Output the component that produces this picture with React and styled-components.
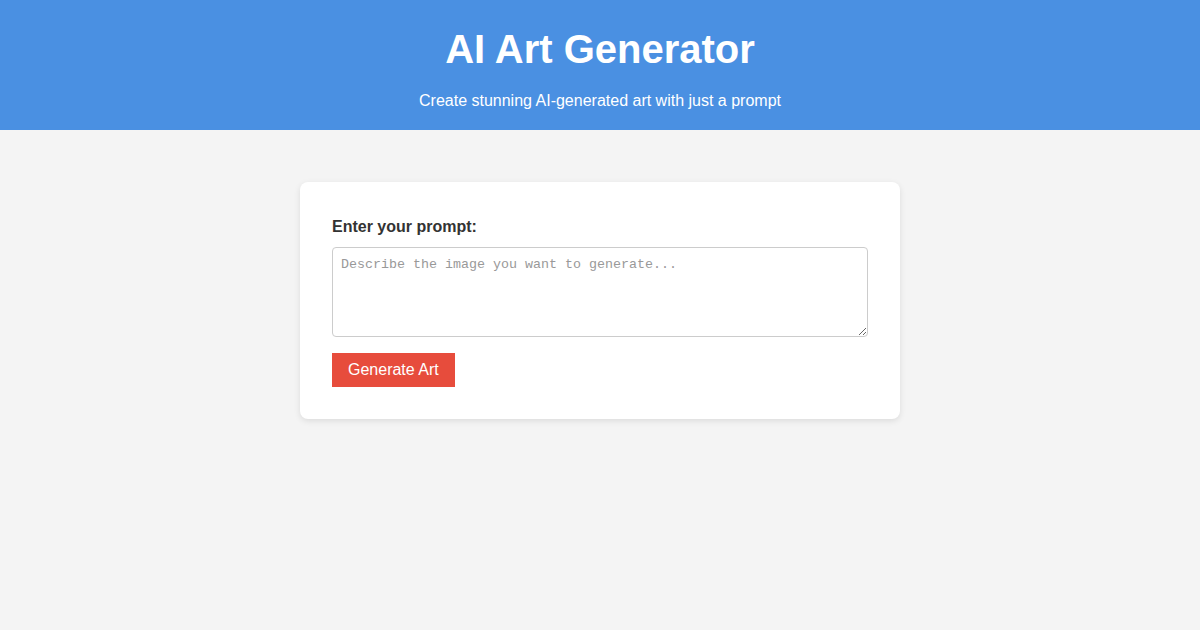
import React, { useState } from "react"
import styled, { createGlobalStyle } from "styled-components"

const GlobalStyle = createGlobalStyle`
  * {
    box-sizing: border-box;
  }

  body {
    margin: 0;
    background: #f4f4f4;
    font-family: "Liberation Sans", Arial, sans-serif;
    color: #333;
  }
`

const S = {
  Header: styled.header`
    background: #4a90e2;
    color: #fff;
    text-align: center;
    padding: 26px 20px 20px;
  `,
  Title: styled.h1`
    margin: 0;
    font-size: 40px;
    font-weight: bold;
    line-height: 46px;
  `,
  Subtitle: styled.p`
    margin: 20px 0 0;
    font-size: 16px;
    line-height: 18px;
  `,
  Main: styled.main`
    display: flex;
    justify-content: center;
    padding: 52px 20px;
  `,
  Card: styled.section`
    width: 600px;
    background: #fff;
    border-radius: 8px;
    box-shadow: 0 2px 6px rgba(0, 0, 0, 0.1);
    padding: 32px;
    display: flex;
    flex-direction: column;
    align-items: flex-start;
  `,
  Label: styled.label`
    display: block;
    margin: 4px 0 11px;
    font-size: 16px;
    line-height: 18px;
    font-weight: bold;
    color: #333;
  `,
  Prompt: styled.textarea`
    display: block;
    width: 100%;
    height: 90px;
    padding: 9px 8px 7px;
    border: 1px solid #ccc;
    border-radius: 4px;
    font-family: "Liberation Mono", monospace;
    font-size: 13.333px;
    color: #333;
    resize: vertical;

    &::placeholder {
      color: #999;
    }
  `,
  Button: styled.button`
    margin-top: 16px;
    padding: 8px 16px;
    border: none;
    border-radius: 0;
    background: #e74c3c;
    color: #fff;
    font-family: "Liberation Sans", Arial, sans-serif;
    font-size: 16px;
    line-height: 18px;
    cursor: pointer;
  `
}

const App = () => {
  const [prompt, setPrompt] = useState("")

  return (
    <>
      <GlobalStyle />
      <S.Header>
        <S.Title>AI Art Generator</S.Title>
        <S.Subtitle>Create stunning AI-generated art with just a prompt</S.Subtitle>
      </S.Header>
      <S.Main>
        <S.Card>
          <S.Label htmlFor="prompt">Enter your prompt:</S.Label>
          <S.Prompt
            id="prompt"
            value={prompt}
            onChange={e => setPrompt(e.target.value)}
            placeholder="Describe the image you want to generate..."
          />
          <S.Button type="button">Generate Art</S.Button>
        </S.Card>
      </S.Main>
    </>
  )
}

export default App
